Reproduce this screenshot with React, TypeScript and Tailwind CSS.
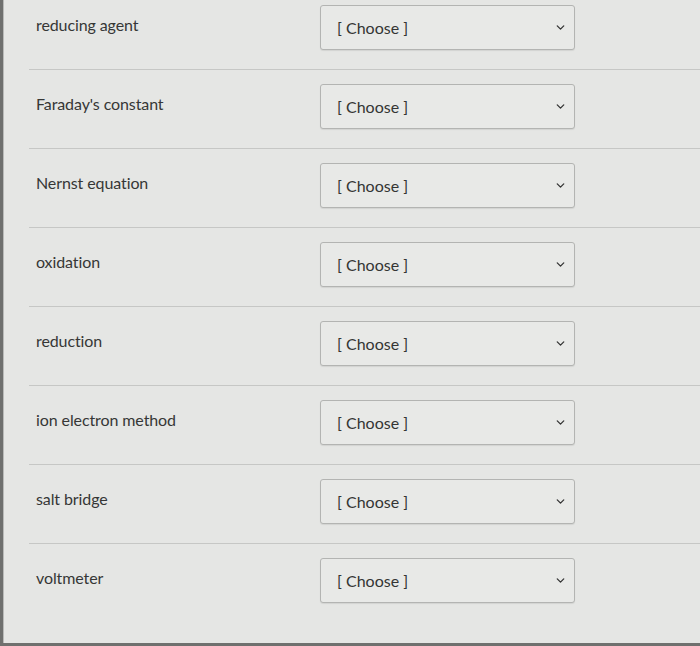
import { ChevronDown } from 'lucide-react'

const terms = [
  'reducing agent',
  "Faraday's constant",
  'Nernst equation',
  'oxidation',
  'reduction',
  'ion electron method',
  'salt bridge',
  'voltmeter'
]

function Select() {
  return (
    <div className="flex h-[45px] w-[255px] shrink-0 items-center justify-between rounded-[3px] border border-[#b3b4b2] bg-[#e8e9e7] pl-[16px] pr-[7px] shadow-[0_1px_1px_rgba(0,0,0,0.08)]">
      <span className="text-[16px] text-[#343534]">[ Choose ]</span>
      <ChevronDown className="h-[13px] w-[13px] text-[#333]" strokeWidth={2.4} />
    </div>
  )
}

export default function App() {
  return (
    <div
      className="flex min-h-[646px] w-[700px] border-b-[3px] border-l-[3px] border-[#6f706e] bg-[#e5e6e4] text-[#363736]"
      style={{ fontFamily: 'Lato, "Open Sans", sans-serif' }}
    >
      <div className="flex-1 border-l border-[#b9bab8] pl-[25px]">
        {terms.map((term, i) => (
          <div
            key={term}
            className={`flex items-center pb-[19px] ${i === 0 ? 'pt-[5px]' : 'border-t border-[#c6c7c5] pt-[14px]'}`}
          >
            <div className="mb-[5px] w-[291px] pl-[7px] text-[16px] tracking-[-0.1px]">{term}</div>
            <Select />
          </div>
        ))}
      </div>
    </div>
  )
}
